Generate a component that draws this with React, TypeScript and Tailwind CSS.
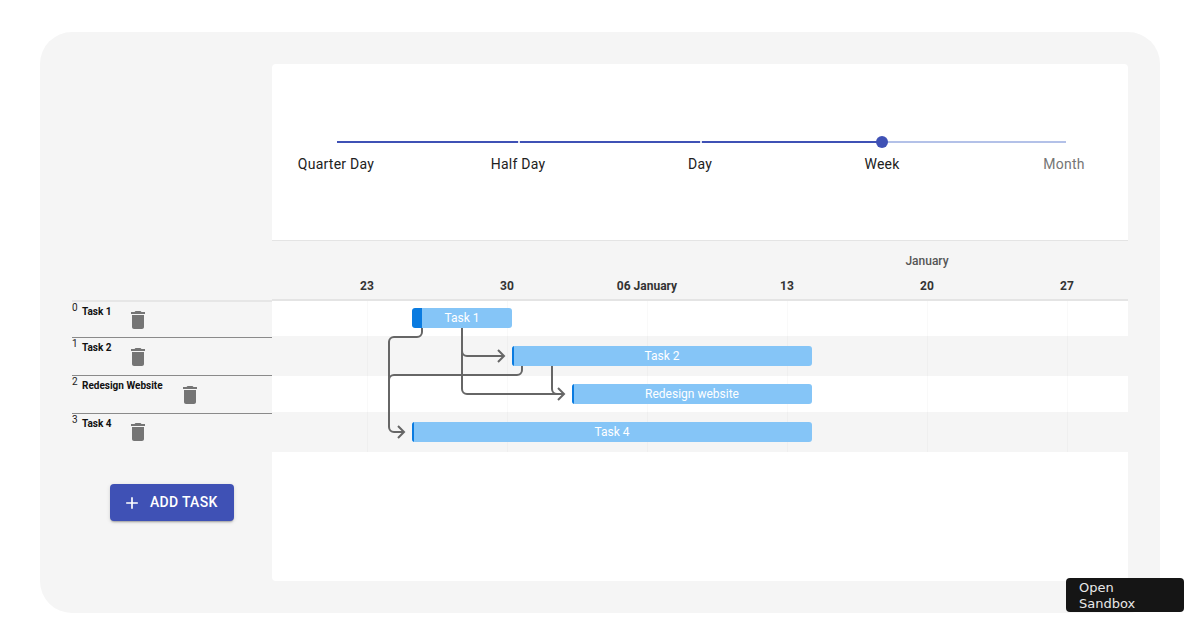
import React from "react";

const rows = [
  { i: 0, name: "Task 1", h: "h-[37px]", line: "border-t-2 border-[#e6e6e6]", icon: "ml-[14px] mt-[6px]" },
  { i: 1, name: "Task 2", h: "h-[38px]", line: "border-t border-[#8a8a8a]", icon: "ml-[14px] mt-[7px]" },
  { i: 2, name: "Redesign Website", h: "h-[38px]", line: "border-t border-[#8a8a8a]", icon: "ml-[15px] mt-[7px]" },
  { i: 3, name: "Task 4", h: "h-[38px]", line: "border-t border-[#8a8a8a]", icon: "ml-[14px] mt-[6px]" },
];

const Trash = () => (
  <svg viewBox="0 0 24 24" className="w-6 h-6 shrink-0 fill-[#757575]">
    <path d="M6 19c0 1.1.9 2 2 2h8c1.1 0 2-.9 2-2V7H6v12zM19 4h-3.5l-1-1h-5l-1 1H5v2h14V4z" />
  </svg>
);

const bars = [
  { name: "Task 1", rowClass: "h-[35px] bg-white pt-[7px] pl-[140px]", barClass: "w-[100px]", prog: "w-[10px] rounded-l-[3px]" },
  { name: "Task 2", rowClass: "h-[40px] bg-[#f5f5f5] pt-[10px] pl-[240px]", barClass: "w-[300px]", prog: "w-[2px]" },
  { name: "Redesign website", rowClass: "h-[36px] bg-white pt-[8px] pl-[300px]", barClass: "w-[240px]", prog: "w-[2px]" },
  { name: "Task 4", rowClass: "h-[40px] bg-[#f5f5f5] pt-[10px] pl-[140px]", barClass: "w-[400px]", prog: "w-[2px]" },
];

const sliderLabels = ["Quarter Day", "Half Day", "Day", "Week", "Month"];
const ticks = ["23", "30", "06 January", "13", "20", "27"];

export default function App() {
  return (
    <div className="h-[630px] w-[1200px] bg-white pt-[32px] px-[40px] overflow-hidden relative font-['Roboto',sans-serif]">
      <div className="h-[581px] rounded-[32px] bg-[#f5f5f5] pt-[32px] pb-[32px] px-[32px] flex">
        <div className="w-[200px] shrink-0 flex flex-col">
          <div className="h-[236px]" />
          {rows.map((r) => (
            <div key={r.i} className={`${r.h} ${r.line} flex items-start`}>
              <span className="w-[10px] shrink-0 text-[10px] leading-[12px] text-[#222]">{r.i}</span>
              <span className="text-[10px] leading-[12px] font-bold text-[#111] mt-[4px]">{r.name}</span>
              <span className={r.icon}><Trash /></span>
            </div>
          ))}
          <button className="self-center mt-[33px] h-[37px] w-[124px] rounded-[4px] bg-[#3f51b5] text-white text-[14px] font-medium tracking-[0.3px] flex items-center pl-[12px] gap-[8px] shadow-[0_2px_2px_-1px_rgba(0,0,0,0.3),0_1px_4px_0_rgba(0,0,0,0.12)]">
            <svg viewBox="0 0 24 24" className="w-[20px] h-[20px] fill-white"><path d="M19 13h-6v6h-2v-6H5v-2h6V5h2v6h6v2z" /></svg>
            ADD TASK
          </button>
        </div>

        <div className="flex-1 bg-white rounded-[4px] flex flex-col overflow-hidden">
          <div className="h-[176px] shrink-0 pt-[77px] pl-[65px]">
            <div className="relative w-[729px] h-[2px] flex bg-[#b3c1e8]">
              <div className="w-[545px] h-[2px] bg-[#3f51b5] flex justify-start">
                <div className="ml-[181px] w-[2px] h-[2px] bg-[#dfe3f3]" />
                <div className="ml-[180px] w-[2px] h-[2px] bg-[#dfe3f3]" />
              </div>
              <div className="absolute left-[539px] top-[-5px] w-[12px] h-[12px] rounded-full bg-[#3f51b5]" />
            </div>
            <div className="flex ml-[-92px] mt-[11px]">
              {sliderLabels.map((l, i) => (
                <div key={l} className={`w-[182px] shrink-0 text-center text-[14px] leading-[20px] tracking-[0.25px] ${i === 4 ? "text-[#757575]" : "text-[#212121]"}`}>{l}</div>
              ))}
            </div>
          </div>

          <div className="h-[61px] shrink-0 bg-[#f5f5f5] border-t border-[#e4e4e4] border-b-2 border-b-[#e4e4e4]">
            <div className="flex pl-[585px] pt-[12px] h-[27px]">
              <div className="w-[140px] text-center text-[12px] leading-[16px] font-medium text-[#555]">January</div>
            </div>
            <div className="flex pl-[25px] pt-[10px]">
              {ticks.map((t) => (
                <div key={t} className="w-[140px] shrink-0 text-center text-[12px] leading-[16px] font-bold text-[#333]">{t}</div>
              ))}
            </div>
          </div>

          <div className="relative">
            {bars.map((b) => (
              <div key={b.name} className={b.rowClass}>
                <div className={`${b.barClass} h-[20px] rounded-[3px] bg-[#85c5f7] relative z-10 flex items-center justify-center overflow-hidden`}>
                  <div className={`absolute left-0 top-0 h-full bg-[#0a7be0] ${b.prog}`} />
                  <span className="text-white text-[12px] leading-[20px]">{b.name}</span>
                </div>
              </div>
            ))}
            <div className="absolute inset-0 flex pl-[95px] pointer-events-none">
              {ticks.map((t) => (
                <div key={t} className="w-[140px] shrink-0 border-l border-[rgba(0,0,0,0.025)]" />
              ))}
            </div>
            <svg className="absolute left-0 top-0 z-20 pointer-events-none" width="856" height="151" viewBox="272 301 856 151" fill="none" stroke="#666666" strokeWidth="2">
              <path d="M462 328V351a5 5 0 0 0 5 5H504" />
              <path d="M498 350L504 356L498 362" />
              <path d="M462 328V389a5 5 0 0 0 5 5H563" />
              <path d="M558 388L564 394L558 400" />
              <path d="M422 328V332a5 5 0 0 1 -5 5H394a5 5 0 0 0 -5 5V427a5 5 0 0 0 5 5H404" />
              <path d="M398 426L404 432L398 438" />
              <path d="M522 366V370a5 5 0 0 1 -5 5H394a5 5 0 0 0 -5 5V390" />
              <path d="M552 366V389a5 5 0 0 0 5 5H563" />
            </svg>
          </div>
        </div>
      </div>
      <div className="absolute left-[1066px] top-[578px] w-[118px] h-[34px] rounded-[4px] bg-[#151515] text-[#e8e8e8] pl-[13px] text-[13px] leading-[16px] font-['DejaVu_Sans',sans-serif] pt-[2px]">
        Open<br />Sandbox
      </div>
    </div>
  );
}
